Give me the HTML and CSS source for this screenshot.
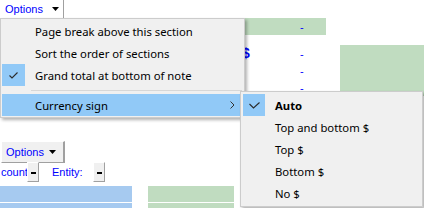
FILE: index.html
```html
<!DOCTYPE html>
<html>
<head>
<meta charset="utf-8">
<link rel="stylesheet" href="styles.css">
</head>
<body>
<div class="screen">
  <div class="topbar">
    <div class="optbtn flat"><span>Options</span><svg class="arrow" width="7" height="4" viewBox="0 0 7 4"><polygon points="0,0 7,0 3.5,4" fill="#000"/></svg></div>
  </div>

  <div class="report">
    <div class="rep-row first">
      <div class="c-lbl"></div>
      <div class="c-a green"><span class="dash">-</span></div>
      <div class="c-gap"></div>
      <div class="c-b"></div>
    </div>
    <div class="rep-row second">
      <div class="c-lbl"></div>
      <div class="c-a"><span class="dollar">$</span><span class="dash">-</span></div>
      <div class="c-gap"></div>
      <div class="c-b green"></div>
    </div>
    <div class="rep-row">
      <div class="c-lbl"></div>
      <div class="c-a"><span class="dash">-</span></div>
      <div class="c-gap"></div>
      <div class="c-b green"></div>
    </div>
    <div class="rep-row">
      <div class="c-lbl"></div>
      <div class="c-a"><span class="dash">-</span></div>
      <div class="c-gap"></div>
      <div class="c-b green"></div>
    </div>
  </div>

  <div class="lower">
    <div class="optbtn raised"><span>Options</span><svg class="arrow" width="7" height="4" viewBox="0 0 7 4"><polygon points="0,0 7,0 3.5,4" fill="#000"/></svg></div>
    <div class="filters">
      <span class="flabel count">count</span>
      <span class="minibtn"><i></i></span>
      <span class="flabel entity">Entity:</span>
      <span class="minibtn"><i></i></span>
    </div>
    <div class="bars">
      <div class="bar blue"></div><div></div><div class="bar green"></div>
      <div class="bar blue"></div><div></div><div class="bar green"></div>
    </div>
  </div>

  <div class="menu main">
    <div class="item">Page break above this section</div>
    <div class="item">Sort the order of sections</div>
    <div class="item checked"><span class="chk"><svg width="9" height="7" viewBox="0 0 9 7"><polyline points="0.5,3.5 3,6 8.5,0.5" fill="none" stroke="#2b2b2b" stroke-width="1.1"/></svg></span>Grand total at bottom of note</div>
    <div class="sep"></div>
    <div class="item hl">Currency sign<svg class="chev" width="5" height="8" viewBox="0 0 5 8"><polyline points="0.5,0.5 4,4 0.5,7.5" fill="none" stroke="#333" stroke-width="1"/></svg></div>
  </div>

  <div class="menu sub">
    <div class="item checked bold"><span class="chk"><svg width="11" height="7" viewBox="0 0 11 7"><polyline points="0.5,2 4.5,6 10.5,0.5" fill="none" stroke="#2b2b2b" stroke-width="1.1"/></svg></span>Auto</div>
    <div class="item">Top and bottom $</div>
    <div class="item">Top $</div>
    <div class="item">Bottom $</div>
    <div class="item">No $</div>
  </div>
</div>
</body>
</html>
```

FILE: styles.css
```css
* { box-sizing: border-box; }
html, body { margin: 0; padding: 0; background: #fff; }
body {
  width: 424px;
  height: 208px;
  overflow: hidden;
  font-family: "Liberation Sans", Arial, sans-serif;
  font-size: 11px;
}
.screen { position: relative; width: 424px; height: 208px; overflow: hidden; }

.topbar { height: 18px; display: flex; }
.optbtn { display: flex; align-items: center; color: #0000ff; }
.optbtn .arrow { margin-left: auto; }
.optbtn.flat {
  width: 64px;
  height: 18px;
  padding: 0 4px 0 5px;
  background: #fff;
  border-right: 1px solid #a0a0a0;
}
.optbtn.raised {
  margin-left: 1px;
  width: 64px;
  height: 22px;
  padding: 0 7px 0 4px;
  background: #f0f0f0;
  border-top: 1px solid #fff;
  border-left: 1px solid #fff;
  border-right: 2px solid #a0a0a0;
  border-bottom: 1px solid #a0a0a0;
}

.report { display: flex; flex-direction: column; }
.rep-row {
  display: grid;
  grid-template-columns: 245px 81px 14px 84px;
  height: 16px;
  margin-top: 1px;
}
.rep-row.first { margin-top: 0; }
.rep-row.second { margin-top: 11px; }
.green { background: #c0dcc0; }
.blue { background: #a6caf0; }
.c-a { position: relative; display: flex; align-items: flex-start; color: #0000ff; }
.dash { margin-left: 55px; line-height: 16px; padding-top: 1px; }
.dollar {
  position: absolute;
  left: -3px;
  top: 0;
  font-weight: bold;
  font-size: 14px;
  line-height: 16px;
}

.lower { margin-top: 46px; }
.filters {
  display: flex;
  align-items: center;
  height: 20px;
  margin-top: -1px;
  color: #0000ff;
}
.flabel.count { width: 27px; padding-left: 1px; }
.flabel.entity { width: 54px; padding-left: 13px; }
.minibtn {
  width: 12px;
  height: 20px;
  background: #f0f0f0;
  border-top: 1px solid #fff;
  border-left: 1px solid #fff;
  border-right: 1px solid #a0a0a0;
  border-bottom: 1px solid #a0a0a0;
  display: flex;
  justify-content: center;
  align-items: flex-start;
}
.minibtn i { display: block; width: 5px; height: 2px; background: #000; margin-top: 9px; }

.bars {
  margin-top: 4px;
  display: grid;
  grid-template-columns: 132px 16px 86px;
  grid-auto-rows: 16px;
  row-gap: 1px;
}

.menu {
  position: absolute;
  background: #f0f0f0;
  border: 1px solid #cccccc;
  box-shadow: 2px 2px 3px rgba(0, 0, 0, 0.3);
  font-family: "Noto Sans", "Open Sans", sans-serif;
  font-size: 11.3px;
  color: #000;
}
.menu.main { left: 0; top: 18px; width: 245px; height: 100px; padding: 1px 2px 1px 1px; }
.menu.sub { left: 240px; top: 91px; width: 183px; height: 116px; padding: 2px 2px 2px 2px; }
.item {
  position: relative;
  height: 22px;
  display: flex;
  align-items: center;
  padding-left: 33px;
  white-space: nowrap;
}
.menu.sub .item { padding-left: 32px; }
.item.bold { font-weight: bold; }
.item.hl { background: #91c9f7; }
.chk {
  position: absolute;
  left: 0;
  top: 0;
  width: 23px;
  height: 22px;
  background: #91c9f7;
  display: flex;
  align-items: center;
  justify-content: center;
}
.menu.sub .chk { width: 22px; }
.chev { position: absolute; right: 7px; top: 7px; }
.sep { height: 8px; margin-left: 29px; position: relative; }
.sep::before {
  content: "";
  position: absolute;
  left: 0;
  right: 0;
  top: 4px;
  border-top: 1px solid #d7d7d7;
}
```
